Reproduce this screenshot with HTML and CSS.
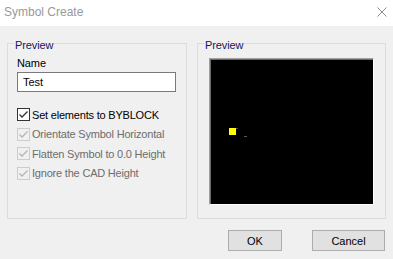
FILE: index.html
```html
<!DOCTYPE html>
<html>
<head>
<meta charset="utf-8">
<link rel="stylesheet" href="styles.css">
</head>
<body>
<div class="dialog">
  <div class="titlebar">
    <span class="title">Symbol Create</span>
    <svg class="close" width="10" height="10" viewBox="0 0 10 10"><path d="M0.5 0.5 L9.5 9.5 M9.5 0.5 L0.5 9.5" stroke="#8c8c8c" stroke-width="1" fill="none"/></svg>
  </div>
  <div class="content">
    <div class="groups">
      <div class="group group-left">
        <div class="legend">Preview</div>
        <div class="field-label">Name</div>
        <div class="input">Test</div>
        <div class="checks">
          <div class="check">
            <span class="box"><svg width="11" height="11" viewBox="0 0 11 11"><path d="M1.5 5.5 L4 8 L9.5 2.5" stroke="#333" stroke-width="1.3" fill="none"/></svg></span>
            <span class="check-text">Set elements to BYBLOCK</span>
          </div>
          <div class="check disabled">
            <span class="box"><svg width="11" height="11" viewBox="0 0 11 11"><path d="M1.5 5.5 L4 8 L9.5 2.5" stroke="#b4b4b4" stroke-width="1.3" fill="none"/></svg></span>
            <span class="check-text">Orientate Symbol Horizontal</span>
          </div>
          <div class="check disabled">
            <span class="box"><svg width="11" height="11" viewBox="0 0 11 11"><path d="M1.5 5.5 L4 8 L9.5 2.5" stroke="#b4b4b4" stroke-width="1.3" fill="none"/></svg></span>
            <span class="check-text">Flatten Symbol to 0.0 Height</span>
          </div>
          <div class="check disabled">
            <span class="box"><svg width="11" height="11" viewBox="0 0 11 11"><path d="M1.5 5.5 L4 8 L9.5 2.5" stroke="#b4b4b4" stroke-width="1.3" fill="none"/></svg></span>
            <span class="check-text">Ignore the CAD Height</span>
          </div>
        </div>
      </div>
      <div class="group group-right">
        <div class="legend">Preview</div>
        <div class="canvas">
          <div class="sym"></div>
          <div class="sym-dot"></div>
          <div class="mark"></div>
        </div>
      </div>
    </div>
    <div class="buttons">
      <button class="btn btn-ok">OK</button>
      <button class="btn btn-cancel">Cancel</button>
    </div>
  </div>
</div>
</body>
</html>
```

FILE: styles.css
```css
html, body {
  margin: 0;
  padding: 0;
}

body {
  font-family: "Liberation Sans", Arial, sans-serif;
  font-size: 11px;
  color: #000;
  background: #f0f0f0;
}

.dialog {
  width: 393px;
  height: 259px;
  background: #f0f0f0;
  overflow: hidden;
}

.titlebar {
  height: 26px;
  background: #ffffff;
  display: flex;
  align-items: flex-start;
  justify-content: space-between;
  padding: 5px 6px 0 4px;
  box-sizing: border-box;
}

.title {
  font-size: 12px;
  line-height: 14px;
  color: #999999;
}

.close {
  display: block;
  margin-top: 2px;
}

.content {
  padding: 17px 7px 0 7px;
}

.groups {
  display: flex;
  gap: 10px;
}

.group {
  box-sizing: border-box;
  height: 176px;
  border: 1px solid #dcdcdc;
}

.group-left {
  width: 180px;
  padding: 0 9px;
}

.group-right {
  width: 189px;
}

.legend {
  width: fit-content;
  margin: -5px 0 0 6px;
  padding: 0 1px;
  line-height: 13px;
  background: #f0f0f0;
  color: #151560;
  letter-spacing: -0.1px;
}

.group-left .legend {
  margin-left: -3px;
}

.field-label {
  margin-top: 5px;
  line-height: 13px;
  letter-spacing: -0.1px;
}

.input {
  margin-top: 2px;
  width: 159px;
  height: 20px;
  box-sizing: border-box;
  border: 1px solid #7a7a7a;
  background: #fff;
  padding-left: 5px;
  line-height: 18px;
}

.checks {
  margin-top: 13px;
  display: flex;
  flex-direction: column;
}

.check {
  height: 19.5px;
  display: flex;
  align-items: center;
  gap: 2px;
  white-space: nowrap;
  letter-spacing: -0.2px;
}

.box {
  width: 13px;
  height: 13px;
  box-sizing: border-box;
  border: 1px solid #333333;
  background: #ffffff;
  flex: none;
}

.box svg {
  display: block;
}

.check.disabled .box {
  border-color: #cccccc;
  background: #f0f0f0;
}

.check.disabled .check-text {
  color: #6d6d6d;
}

.canvas {
  position: relative;
  margin: 6px 0 0 11px;
  width: 165px;
  height: 147px;
  box-sizing: border-box;
  background: #000;
  border-style: solid;
  border-width: 1px;
  border-color: #a0a0a0 #ffffff #ffffff #a0a0a0;
  box-shadow: inset 1px 1px 0 #696969;
}

.sym {
  position: absolute;
  left: 19px;
  top: 69px;
  width: 7px;
  height: 7px;
  background: #ffff00;
}

.sym-dot {
  position: absolute;
  left: 26px;
  top: 69px;
  width: 2px;
  height: 1px;
  background: #4a4a4a;
}

.mark {
  position: absolute;
  left: 34px;
  top: 77px;
  width: 3px;
  height: 1px;
  background: #5a5a5a;
}

.buttons {
  margin-top: 11px;
  display: flex;
  justify-content: flex-end;
  gap: 30px;
  padding-right: 1px;
}

.btn {
  height: 21px;
  box-sizing: border-box;
  border: 1px solid #adadad;
  background: #e1e1e1;
  font-family: "Liberation Sans", Arial, sans-serif;
  font-size: 11px;
  color: #000;
  padding: 0;
  margin: 0;
  border-radius: 0;
}

.btn-ok {
  width: 54px;
}

.btn-cancel {
  width: 73px;
}
```
